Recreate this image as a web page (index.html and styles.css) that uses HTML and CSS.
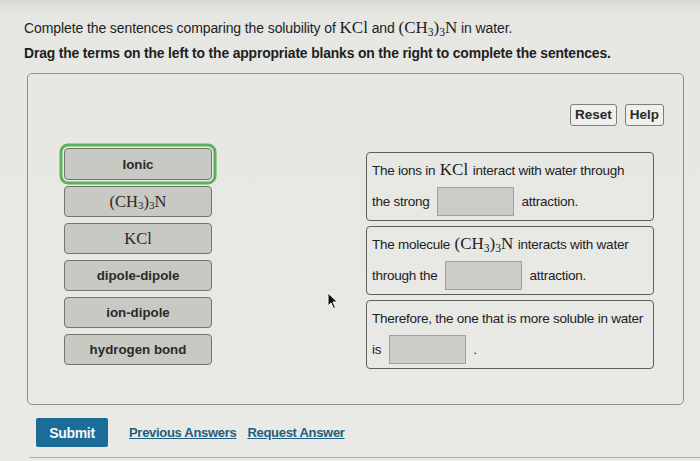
FILE: index.html
```html
<!DOCTYPE html>
<html>
<head>
<meta charset="utf-8">
<link rel="stylesheet" href="styles.css">
</head>
<body>
<div class="page">
  <p class="intro">Complete the sentences comparing the solubility of <span class="chem">KCl</span> and <span class="chem">(CH<sub>3</sub>)<sub>3</sub>N</span> in water.</p>
  <p class="instr">Drag the terms on the left to the appropriate blanks on the right to complete the sentences.</p>

  <div class="panel">
    <div class="toolbar">
      <button class="tool">Reset</button>
      <button class="tool">Help</button>
    </div>
    <div class="work">
      <div class="terms">
        <div class="term selected">Ionic</div>
        <div class="term chem-term">(CH<sub>3</sub>)<sub>3</sub>N</div>
        <div class="term chem-term">KCl</div>
        <div class="term">dipole-dipole</div>
        <div class="term">ion-dipole</div>
        <div class="term">hydrogen bond</div>
      </div>
      <div class="sentences">
        <div class="sentence">
          <div class="line">The ions in <span class="chem">KCl</span> interact with water through</div>
          <div class="line fill">the strong <span class="blank"></span> attraction.</div>
        </div>
        <div class="sentence">
          <div class="line">The molecule <span class="chem">(CH<sub>3</sub>)<sub>3</sub>N</span> interacts with water</div>
          <div class="line fill">through the <span class="blank"></span> attraction.</div>
        </div>
        <div class="sentence">
          <div class="line">Therefore, the one that is more soluble in water</div>
          <div class="line fill">is <span class="blank"></span> .</div>
        </div>
      </div>
    </div>
  </div>

  <div class="actions">
    <button class="submit">Submit</button>
    <a class="link" href="#">Previous Answers</a>
    <a class="link" href="#">Request Answer</a>
  </div>
  <div class="rule"></div>
</div>
<svg class="cursor" width="12" height="18" viewBox="0 0 12 18"><path d="M1 1 L1 14 L4 11 L6.5 16.5 L8.5 15.5 L6 10 L10.5 10 Z" fill="#111" stroke="#fff" stroke-width="1"/></svg>
</body>
</html>
```

FILE: styles.css
```css
html, body {
  margin: 0;
  padding: 0;
}
body {
  width: 700px;
  height: 461px;
  overflow: hidden;
  background: linear-gradient(to bottom, #d6d7d2 0px, #e6e6e2 12px, #e9e9e5 100%);
  font-family: "Liberation Sans", Arial, sans-serif;
  color: #1e1e1e;
  position: relative;
}
.page {
  padding: 17px 0 0 24px;
}
.intro {
  margin: 0;
  font-size: 14px;
  line-height: 22px;
  letter-spacing: -0.1px;
}
.chem {
  font-family: "Liberation Serif", "Times New Roman", serif;
  font-size: 17px;
  letter-spacing: 0;
}
.chem sub, .chem-term sub {
  font-size: 0.68em;
  position: relative;
  top: 0.3em;
  vertical-align: baseline;
  line-height: 0;
}
.instr {
  margin: 5px 0 0 0;
  font-size: 13.9px;
  font-weight: bold;
  line-height: 18px;
  letter-spacing: -0.15px;
}
.panel {
  margin: 11px 0 0 3px;
  width: 657px;
  height: 332px;
  box-sizing: border-box;
  border: 1px solid #8e8e8a;
  border-radius: 5px;
  padding: 30px 0 0 0;
}
.toolbar {
  display: flex;
  justify-content: flex-end;
  gap: 8px;
  padding-right: 19px;
}
.tool {
  font-family: "Liberation Sans", Arial, sans-serif;
  font-weight: bold;
  font-size: 13.5px;
  color: #2a2a2a;
  background: #efefec;
  border: 1px solid #7e7e7a;
  border-radius: 3px;
  height: 22px;
  padding: 0 4px;
  line-height: 20px;
}
.work {
  display: flex;
  margin-top: 22px;
  padding-left: 36px;
}
.terms {
  width: 148px;
  display: flex;
  flex-direction: column;
  gap: 6px;
}
.term {
  height: 31px;
  box-sizing: border-box;
  background: #c9c9c4;
  border: 1.5px solid #74746f;
  border-radius: 4px;
  display: flex;
  align-items: center;
  justify-content: center;
  font-weight: bold;
  font-size: 13.3px;
  color: #2a2a2a;
}
.term.selected {
  height: 32px;
  box-shadow: 0 0 0 1.5px #e4efe0, 0 0 0 4.5px #5cb15a;
}
.chem-term {
  font-family: "Liberation Serif", "Times New Roman", serif;
  font-weight: normal;
  font-size: 16.5px;
}
.sentences {
  margin-left: 154px;
  margin-top: 4px;
  width: 288px;
  display: flex;
  flex-direction: column;
  gap: 5px;
}
.sentence {
  box-sizing: border-box;
  border: 1.5px solid #5e5e5a;
  border-radius: 4px;
  padding: 5px 4px 5px 5px;
  height: 69px;
  font-size: 13.5px;
  letter-spacing: -0.25px;
  color: #222;
}
.line {
  height: 24px;
  display: flex;
  align-items: center;
  white-space: pre;
}
.line .chem {
  margin: 0 1px;
}
.line.fill {
  margin-top: 5px;
  height: 29px;
}
.blank {
  display: inline-block;
  width: 77px;
  height: 29px;
  box-sizing: border-box;
  background: #cbccc7;
  border: 1px solid #a0a09c;
  margin: 0 4px;
}
.actions {
  display: flex;
  align-items: center;
  margin-top: 13px;
  padding-left: 12px;
}
.submit {
  width: 72px;
  height: 29px;
  background: #1b6c98;
  color: #f4f8fb;
  border: none;
  border-radius: 2px;
  font-family: "Liberation Sans", Arial, sans-serif;
  font-size: 14px;
  font-weight: bold;
  letter-spacing: -0.3px;
  margin-right: 21px;
}
.link {
  color: #1e5e80;
  font-weight: bold;
  font-size: 13px;
  letter-spacing: -0.3px;
  text-decoration: underline;
  margin-right: 11px;
}
.rule {
  margin-top: 10px;
  margin-left: 6px;
  width: 680px;
  border-top: 1px solid #a8a8a4;
}
.cursor {
  position: absolute;
  left: 327px;
  top: 292px;
}
```
